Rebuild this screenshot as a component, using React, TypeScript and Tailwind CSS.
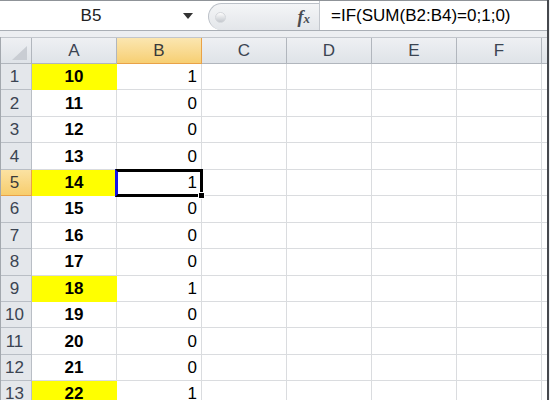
import React from "react"

const cols = ["A", "B", "C", "D", "E", "F"]
const rows = Array.from({ length: 13 }, (_, i) => ({
  n: i + 1,
  a: 10 + i,
  b: i % 4 === 0 ? 1 : 0,
  yellow: i % 4 === 0,
}))

function Corner() {
  return (
    <div className="w-[31px] shrink-0 relative border-r border-b border-[#b1b6bd] bg-gradient-to-b from-[#eef0f3] to-[#dfe3e8]">
      <svg className="absolute right-[4px] bottom-[3px]" width="15" height="14" viewBox="0 0 15 14">
        <polygon points="15,0 15,14 0,14" fill="#c9cdd3" />
      </svg>
    </div>
  )
}

function ColHeader({ label, selected }: { label: string; selected: boolean }) {
  return (
    <div
      className={
        selected
          ? "w-[85px] shrink-0 flex items-center justify-center border-r border-b border-[#e9a247] bg-gradient-to-b from-[#fbe6b0] to-[#f7cf72] text-[#3a3a3a]"
          : "w-[85px] shrink-0 flex items-center justify-center border-r border-b border-[#b1b6bd] bg-gradient-to-b from-[#eef0f3] to-[#dfe3e8] text-[#3b4452]"
      }
    >
      {label}
    </div>
  )
}

export default function App() {
  return (
    <div className="w-[550px] h-[400px] overflow-hidden bg-white flex font-['Liberation_Sans',Arial,sans-serif] text-[17px] leading-none">
      <div className="w-[547px] flex flex-col">
        {/* top strip */}
        <div className="h-[3px] bg-[#c9ccd0] border-b border-[#8f9398]" />

        {/* formula bar */}
        <div className="h-[30px] flex border-b border-[#a9aeb5] shrink-0">
          <div className="w-[208px] bg-white flex items-center">
            <div className="w-[182px] text-center text-[#222]">B5</div>
            <svg width="10" height="6" viewBox="0 0 10 6" className="ml-[1px]">
              <polygon points="0,0 10,0 5,6" fill="#333" />
            </svg>
          </div>
          <div className="w-[111px] bg-white pt-[2px]">
            <div className="h-full rounded-l-[14px] border border-r-0 border-b-0 border-[#bcc1c8] bg-gradient-to-b from-[#f4f5f7] to-[#e3e6ea] flex items-center pl-[6px] pr-[9px]">
              <div className="w-[11px] h-[11px] rounded-full bg-gradient-to-b from-[#fdfdfd] to-[#c4c8ce] border border-[#d4d7db]" />
              <span className="ml-auto font-['Liberation_Serif',serif] italic font-bold text-[18px] text-[#4a4d52]">
                f<span className="text-[13px]">x</span>
              </span>
            </div>
          </div>
          <div className="flex-1 bg-white border-l border-[#c3c7cd] flex items-center pl-[11px] text-black">
            =IF(SUM(B2:B4)=0;1;0)
          </div>
        </div>

        {/* band */}
        <div className="h-[6px] bg-[#eceef1] shrink-0" />

        {/* grid */}
        <div className="flex-1 border-l border-[#a3a8ae] flex flex-col">
          <div className="h-[27px] flex border-t border-[#c2c6cc] shrink-0">
            <Corner />
            {cols.map((c) => (
              <ColHeader key={c} label={c} selected={c === "B"} />
            ))}
            <div className="flex-1 border-b border-[#b1b6bd] bg-gradient-to-b from-[#eef0f3] to-[#dfe3e8]" />
          </div>

          {rows.map((r) => (
            <div key={r.n} className="h-[26.45px] flex shrink-0">
              <div
                className={
                  r.n === 5
                    ? "w-[31px] shrink-0 flex items-center justify-center pr-[3px] border border-l-0 border-t-0 border-[#e9a247] bg-gradient-to-b from-[#fbe2a2] to-[#f7cd6c] text-[#3a3a3a]"
                    : "w-[31px] shrink-0 flex items-center justify-center pr-[3px] border-r border-b border-[#b9bec5] bg-[#e4e7eb] text-[#3b4452]"
                }
              >
                {r.n}
              </div>
              <div
                className={
                  "w-[85px] shrink-0 flex items-center justify-center font-bold text-black border-b border-r " +
                  (r.yellow ? "bg-[#ffff00] border-[#ffff00]" : "border-[#dadcdf]")
                }
              >
                {r.a}
              </div>
              <div className="w-[85px] shrink-0 relative flex items-center justify-end pr-[4px] text-black border-b border-r border-[#dadcdf]">
                {r.b}
                {r.n === 5 && (
                  <div className="absolute -left-[2px] -top-[1px] w-[88px] h-[28px] border-[3px] border-black border-l-[#1414e6] z-10">
                    <div className="absolute -right-[5px] -bottom-[5px] w-[7px] h-[7px] bg-black border border-white" />
                  </div>
                )}
              </div>
              {["C", "D", "E", "F"].map((c) => (
                <div key={c} className="w-[85px] shrink-0 border-b border-r border-[#dadcdf]" />
              ))}
              <div className="flex-1 border-b border-[#dadcdf]" />
            </div>
          ))}
        </div>
      </div>
      <div className="w-[2px] bg-[#45484d]" />
      <div className="w-[1px] bg-[#eef0f2]" />
    </div>
  )
}
